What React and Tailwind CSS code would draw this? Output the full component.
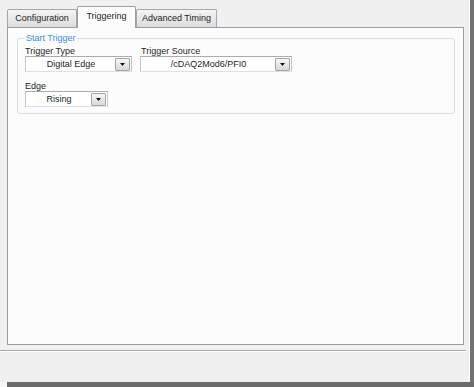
function Tab({ label, width, selected }) {
  if (selected) {
    return (
      <div
        className={`relative z-10 ${width} h-[22px] -mb-px flex items-center justify-center pb-[2px] border border-b-0 border-[#9a9da4] rounded-t-[2px] bg-[#fcfcfc]`}
      >
        {label}
      </div>
    );
  }
  return (
    <div
      className={`${width} h-[18px] flex items-center justify-center border border-b-0 border-[#a3a6ac] rounded-t-[2px] bg-linear-to-b from-[#f4f4f4] to-[#dcdcdc]`}
    >
      {label}
    </div>
  );
}

function Combo({ value, width }) {
  return (
    <div
      className={`${width} h-[16px] flex items-center bg-white border border-t-[#a9abb0] border-l-[#c4c6cb] border-r-[#c4c6cb] border-b-[#dde1e6]`}
    >
      <div className="flex-1 text-center leading-[14px] pl-[1px]">{value}</div>
      <div className="w-[15px] h-[13px] mr-[1px] flex items-center justify-center border border-[#a4a4a4] rounded-[1px] bg-linear-to-b from-[#f6f6f6] to-[#dadada]">
        <svg width="5" height="3" viewBox="0 0 5 3">
          <polygon points="0,0 5,0 2.5,3" fill="#111" />
        </svg>
      </div>
    </div>
  );
}

export default function App() {
  return (
    <div className="w-[474px] h-[387px] flex flex-col bg-white overflow-hidden font-['Liberation_Sans',Arial,sans-serif] text-[9px] text-[#1e1e1e]">
      <div className="flex h-[382px]">
        <div className="flex-1 flex flex-col bg-[#f0f0f0] border-r border-r-[#fafafa]">
          <div className="flex flex-col pl-[7px] pr-[5px] pt-[6px]">
            <div className="flex items-end h-[21px]">
              <Tab label="Configuration" width="w-[70px]" />
              <Tab label="Triggering" width="w-[59px]" selected />
              <Tab label="Advanced Timing" width="w-[81px]" />
            </div>
            <div className="h-[318px] border border-[#9a9da4] bg-[#fcfcfc] pt-[4px] pl-[9px] pr-[8px]">
              <fieldset className="border border-[#d5dfe5] rounded-[3px] px-[7px] pb-[6px]">
                <legend className="px-[1px] leading-[12px] text-[#3a8ee6]">Start Trigger</legend>
                <div className="flex gap-[8px] mt-[2px]">
                  <div className="flex flex-col">
                    <div className="leading-[10px]">Trigger Type</div>
                    <Combo value="Digital Edge" width="w-[107px]" />
                  </div>
                  <div className="flex flex-col">
                    <div className="leading-[10px] pl-[1px]">Trigger Source</div>
                    <Combo value="/cDAQ2Mod6/PFI0" width="w-[152px]" />
                  </div>
                </div>
                <div className="flex flex-col mt-[9px]">
                  <div className="leading-[10px]">Edge</div>
                  <Combo value="Rising" width="w-[83px]" />
                </div>
              </fieldset>
            </div>
          </div>
          <div className="h-[5px]" />
          <div className="h-px bg-[#a8a8a8] mr-[3px]" />
          <div className="h-px bg-white mr-[3px]" />
          <div className="flex-1" />
        </div>
        <div className="w-[4px] bg-[#727272]" />
      </div>
      <div className="flex h-[5px]">
        <div className="w-[7px] bg-[#f6f6f6]" />
        <div className="flex-1 bg-[#6c6c6c]" />
      </div>
    </div>
  );
}
